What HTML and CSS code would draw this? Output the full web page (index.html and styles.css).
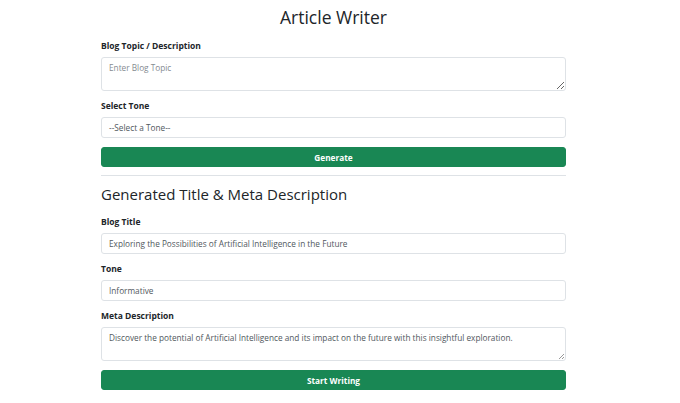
FILE: index.html
```html
<!DOCTYPE html>
<html lang="en">
<head>
<meta charset="utf-8">
<title>Article Writer</title>
<link rel="stylesheet" href="styles.css">
</head>
<body>
<div class="page">
  <main class="container">
    <h1 class="title">Article Writer</h1>
    <form class="form">
      <div class="field">
        <label class="label" for="topic">Blog Topic / Description</label>
        <textarea class="control area" id="topic" placeholder="Enter Blog Topic"></textarea>
      </div>
      <div class="field">
        <label class="label" for="tone">Select Tone</label>
        <div class="control select" id="tone">--Select a Tone--</div>
      </div>
      <button type="button" class="btn">Generate</button>
    </form>
    <hr class="rule">
    <h2 class="subtitle">Generated Title &amp; Meta Description</h2>
    <div class="form">
      <div class="field">
        <label class="label">Blog Title</label>
        <div class="control">Exploring the Possibilities of Artificial Intelligence in the Future</div>
      </div>
      <div class="field">
        <label class="label">Tone</label>
        <div class="control">Informative</div>
      </div>
      <div class="field">
        <label class="label">Meta Description</label>
        <div class="control area">Discover the potential of Artificial Intelligence and its impact on the future with this insightful exploration.<span class="grip"></span></div>
      </div>
      <button type="button" class="btn">Start Writing</button>
    </div>
  </main>
</div>
</body>
</html>
```
FILE: styles.css
```css
* { box-sizing: border-box; }
html, body { margin: 0; padding: 0; background: #fff; }
body {
  font-family: "Open Sans", "Noto Sans", sans-serif;
  color: #212529;
  font-size: 9px;
}
.page { padding-right: 13px; }
.container {
  width: 465px;
  margin: 0 auto;
  padding-top: 5px;
}
.title {
  margin: 0 0 11px;
  text-align: center;
  font-weight: 400;
  font-size: 17.5px;
  line-height: 24px;
}
.form { display: flex; flex-direction: column; }
.field { display: flex; flex-direction: column; margin-bottom: 9px; }
.label {
  font-weight: 700;
  font-size: 8.5px;
  line-height: 12px;
  margin-bottom: 5px;
}
.control {
  position: relative;
  display: flex;
  align-items: center;
  font-family: inherit;
  font-size: 8.25px;
  line-height: 12px;
  color: #51585e;
  border: 1px solid #dee2e6;
  border-radius: 3px;
  padding: 0 7px;
  height: 21px;
  background: #fff;
}
.area {
  display: block;
  height: 34px;
  padding: 4px 7px;
  resize: vertical;
}
.area::placeholder { color: #858b91; }
.grip {
  position: absolute;
  right: 1px;
  bottom: 1px;
  width: 5px;
  height: 5px;
  background: linear-gradient(135deg, transparent 45%, #999 45%, #999 55%, transparent 55%, transparent 75%, #999 75%, #999 85%, transparent 85%);
}
.btn {
  height: 20px;
  border: 1px solid #198754;
  background: #198754;
  color: #fff;
  border-radius: 3px;
  font-family: inherit;
  font-weight: 700;
  font-size: 8.25px;
  padding: 0;
}
.rule {
  border: 0;
  border-top: 1px solid #dee2e6;
  margin: 8px 0 8px;
}
.subtitle {
  margin: 0 0 12px;
  font-weight: 400;
  font-size: 15px;
  line-height: 20px;
}
```
